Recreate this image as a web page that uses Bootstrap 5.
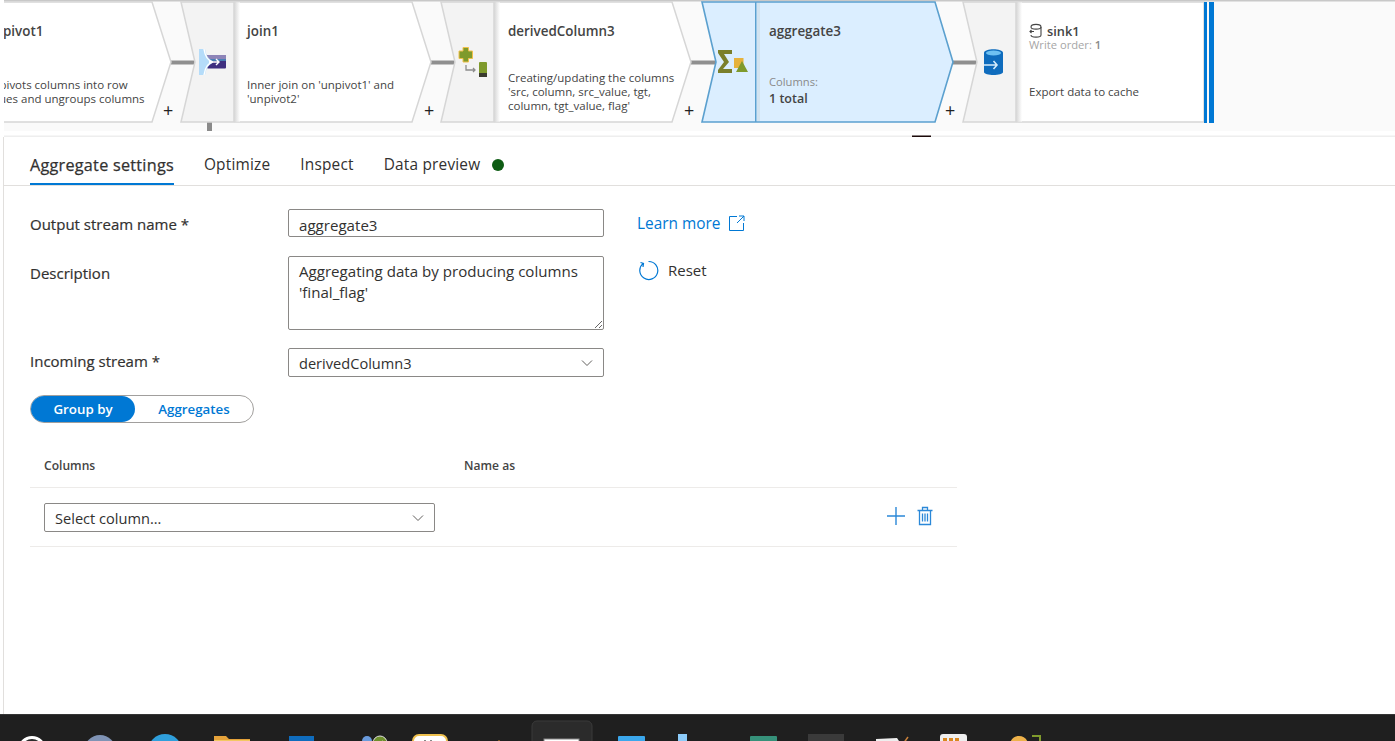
<!DOCTYPE html>
<html lang="en">
<head>
  <meta charset="UTF-8" />
  <meta name="viewport" content="width=device-width, initial-scale=1.0"/>
  <title>Aggregate settings</title>
  <link href="https://cdn.jsdelivr.net/npm/bootstrap@5.3.3/dist/css/bootstrap.min.css" rel="stylesheet" />
  <style>
    html, body { height: 100%; overflow: hidden; }
    body {
      font-family: "Open Sans", "Noto Sans", sans-serif;
      font-size: 14px;
      color: #323130;
      background: #fff;
    }
    .page { height: 741px; }

    /* data flow canvas */
    .graph {
      height: 137px;
      position: relative;
      flex: none;
      clip-path: inset(0 0 0 4px);
    }
    .graph-bg { position: absolute; left: 0; top: 0; }
    .node { position: absolute; top: 0; height: 122px; }
    .node-title { position: absolute; top: 22px; left: 0; font-size: 13.4px; font-weight: 600; color: #444; white-space: nowrap; line-height: 19px; }
    .sink-title { top: 24px; left: 18px; font-size: 12.8px; line-height: 14px; }
    .node-desc { position: absolute; left: 0; top: 92px; transform: translateY(-50%); font-size: 11.5px; line-height: 14px; color: #444; white-space: nowrap; }
    .node-sub { position: absolute; left: 0; top: 38px; font-size: 11.2px; line-height: 14px; color: #a6a6a6; white-space: nowrap; }
    .node-cols { position: absolute; left: 0; top: 75px; font-size: 11.2px; line-height: 14px; color: #8a8a8a; white-space: nowrap; }
    .node-total { position: absolute; left: 0; top: 89px; font-size: 12.5px; font-weight: 600; line-height: 20px; color: #444; white-space: nowrap; }
    .node-add { position: absolute; top: 100px; font-size: 18px; line-height: 20px; color: #222; }

    /* settings pane */
    .pane { flex: 1 1 auto; min-height: 0; margin-left: 3px; border-left: 1px solid #e1dfdd; }
    .tabs { height: 49px; padding-left: 26px; gap: 30px; border-bottom: 1px solid #e1dfdd; }
    .tabs .nav-link {
      padding: 0;
      height: 48px;
      line-height: 56px;
      font-size: 15.4px;
      letter-spacing: .2px;
      color: #323130;
      border-bottom: 2px solid transparent;
    }
    .tabs .nav-link.active { font-size: 16.2px; letter-spacing: .26px; border-bottom-color: #0078d4; -webkit-text-stroke: .25px #323130; }
    .tab-dot { width: 12px; height: 12px; border-radius: 50%; background: #0e5c14; margin: 22px 0 0 -18px; }

    .form-area { padding: 23px 0 0 26px; }
    .form-row-name { width: 258px; flex: none; font-size: 15px; line-height: 20px; -webkit-text-stroke: .2px #323130; }
    .field { width: 316px; flex: none; }
    .form-control, .form-select {
      font-size: 15.1px;
      color: #323130;
      border: 1px solid #8a8886;
      border-radius: 2px;
      padding: 2px 10px;
      line-height: 20px;
      min-height: 0;
    }
    .form-control.single { height: 28px; padding-top: 4px; padding-bottom: 1px; line-height: 20px; }
    textarea.form-control { height: 74px; padding-top: 4px; line-height: 21px; }
    .form-select {
      font-size: 14.6px;
      height: 29px;
      background-image: url("data:image/svg+xml,%3csvg xmlns='http://www.w3.org/2000/svg' viewBox='0 0 12 8'%3e%3cpath fill='none' stroke='%23605e5c' d='M1 1.5l5 5 5-5'/%3e%3c/svg%3e");
      background-size: 12px 8px;
      background-position: right 10px center;
    }
    .side-action { height: 28px; margin-left: 33px; }
    .link-blue { color: #0078d4; text-decoration: none; font-size: 15.4px; padding-top: 1px; }
    .reset-text { font-size: 15px; color: #323130; }

    .toggle { width: 224px; height: 28px; border: 1px solid #a19f9d; border-radius: 14px; }
    .toggle .btn {
      height: 26px; padding: 0; font-size: 13.3px; font-weight: 600; border: 0; border-radius: 13px; line-height: 26px;
    }
    .toggle .on { width: 104px; background: #0078d4; color: #fff; }
    .toggle .off { width: 118px; color: #0078d4; }

    .map-table { width: 927px; margin-top: 24px; }
    .map-head { height: 41px; padding-left: 14px; border-bottom: 1px solid #edebe9; font-size: 12.1px; font-weight: 600; color: #444; line-height: 37px; }
    .map-head .c1 { width: 420px; }
    .map-row { height: 59px; padding: 15px 0 0 14px; border-bottom: 1px solid #edebe9; }
    .map-row .form-select { width: 391px; }
    .map-icons { gap: 12px; margin: 3px 24px 0 0; }

    .taskbar { height: 27px; flex: none; background: #1f1f1f; border-top: 1px solid #353535; overflow: hidden; }
    .taskbar svg { display: block; }
  </style>
</head>
<body>
<div class="page d-flex flex-column">

  <div class="graph">
    <svg class="graph-bg" width="1395" height="137" viewBox="0 0 1395 137">
      <defs>
        <linearGradient id="shade"><stop offset="0" stop-color="#dcdcdc"/><stop offset="1" stop-color="#fff"/></linearGradient>
      </defs>
      <rect width="1395" height="131" fill="#fafafa"/>
      <rect width="1395" height="1.5" fill="#c8c8c8"/>
      <rect y="135.500" width="1395" height="1.5" fill="#eeeeee"/>
      <rect x="207" y="122" width="5" height="9" fill="#8a8a8a"/>
      <rect x="912" y="135.500" width="19" height="2" fill="#1c0a0a"/>

      <!-- connectors -->
      <g fill="#8f8f8f">
        <rect x="171" y="60.500" width="24" height="4"/>
        <rect x="431" y="60.500" width="24" height="4"/>
        <rect x="691" y="60.500" width="25" height="4"/>
        <rect x="953" y="60.500" width="24" height="4"/>
      </g>

      <!-- unpivot1 -->
      <path d="M0 2H152L171 62L152 122H0Z" fill="#fff" stroke="#d6d6d6" stroke-width="1.5"/>
      <!-- join1 -->
      <path d="M181 2H234V122H181L195 62Z" fill="#f3f3f3" stroke="#d6d6d6" stroke-width="1.5"/>
      <path d="M235 2H412L431 62L412 122H235Z" fill="#fff" stroke="#d6d6d6" stroke-width="1.5"/>
      <!-- derivedColumn3 -->
      <path d="M441 2H494V122H441L455 62Z" fill="#f3f3f3" stroke="#d6d6d6" stroke-width="1.5"/>
      <path d="M495 2H672L691 62L672 122H495Z" fill="#fff" stroke="#d6d6d6" stroke-width="1.5"/>
      <!-- aggregate3 -->
      <path d="M702 2H935L953 62L935 122H702L716 62Z" fill="#dbeeff" stroke="#5ba0cf" stroke-width="1.6"/>
      <rect x="755" y="2" width="1.5" height="120" fill="#5ba0cf"/>
      <rect x="757" y="3" width="3" height="118" fill="#d2e3f0"/>
      <!-- sink1 -->
      <path d="M963 2H1016V122H963L977 62Z" fill="#f3f3f3" stroke="#d6d6d6" stroke-width="1.5"/>
      <path d="M1017 2H1204V122H1017Z" fill="#fff" stroke="#d6d6d6" stroke-width="1.5"/>
      <rect x="1204" y="2" width="3" height="121" fill="#0078d4"/>
      <rect x="1209" y="2" width="5" height="121" fill="#0078d4"/>
      <rect x="235" y="2.500" width="5" height="119" fill="url(#shade)"/>
      <rect x="495" y="2.500" width="5" height="119" fill="url(#shade)"/>
      <rect x="1017" y="2.500" width="5" height="119" fill="url(#shade)"/>

      <!-- join icon -->
      <rect x="207" y="55" width="19" height="13.500" rx="1" fill="#3f2f80"/>
      <rect x="207" y="55" width="19" height="4" fill="#8d84b8"/>
      <rect x="207" y="59" width="19" height="2" fill="#4a7fb5"/>
      <path d="M199 49h6c1 6 3 9 7 12v2c-4 3-6 6-7 12h-6z" fill="#b5dcf9"/>
      <path d="M204 49c1 7 4 12 9 13c-5 1-8 6-9 13M209 62h10M216 59l3 3l-3 3" fill="none" stroke="#fff" stroke-width="1.4"/>

      <!-- derived column icon -->
      <path d="M463 47.500h5.500v3.500h4v7.500h-4v3.500h-5.500v-3.500h-4v-7.500h4z" fill="#7f9a2c" stroke="#f0c04a"/>
      <path d="M466 65v5h9M473 68l2 2l-2 2" fill="none" stroke="#8c8c8c" stroke-width="1.3"/>
      <rect x="479" y="62" width="8" height="15" rx="1" fill="#7f9a2c"/>
      <rect x="479" y="73" width="8" height="4" fill="#3a3a2e"/>

      <!-- aggregate icon -->
      <path d="M718 50h14v4h-8l5 8l-6 7h9v4h-14v-3l6-8l-6-9z" fill="#7a7f2b"/>
      <rect x="734" y="58" width="9.500" height="10" fill="#e6b23c"/>
      <path d="M742 61l6 11h-12z" fill="#7f9a2c"/>

      <!-- sink icon -->
      <path d="M984 53c0-5 19-5 19 0v19c0 4-19 4-19 0z" fill="#0f6cbd"/>
      <ellipse cx="993.500" cy="53" rx="7.500" ry="2.500" fill="#6ec1f2"/>
      <path d="M984 65h13M993.500 61l3.500 4l-3.500 4" fill="none" stroke="#d6ecfb" stroke-width="1.6"/>

      <!-- small sink glyph -->
      <g fill="none" stroke="#444" stroke-width="1.1">
        <path d="M1031 27c0-3.500 10-3.500 10 0v8c0 2.800-10 2.800-10 0"/>
        <path d="M1031 27c0 2.800 10 2.800 10 0"/>
        <path d="M1034 31.500h-4M1031.500 30l-1.500 1.500l1.500 1.500"/>
      </g>
    </svg>

    <div class="node" style="left:-14px">
      <div class="node-title">unpivot1</div>
      <div class="node-desc" style="left:-2px">Unpivots columns into row<br>values and ungroups columns</div>
    </div>
    <div class="node-add" style="left:163px">+</div>

    <div class="node" style="left:247px">
      <div class="node-title">join1</div>
      <div class="node-desc">Inner join on 'unpivot1' and<br>'unpivot2'</div>
    </div>
    <div class="node-add" style="left:424px">+</div>

    <div class="node" style="left:508px">
      <div class="node-title">derivedColumn3</div>
      <div class="node-desc">Creating/updating the columns<br>'src, column, src_value, tgt,<br>column, tgt_value, flag'</div>
    </div>
    <div class="node-add" style="left:684px">+</div>

    <div class="node" style="left:769px">
      <div class="node-title">aggregate3</div>
      <div class="node-cols">Columns:</div>
      <div class="node-total">1 total</div>
    </div>
    <div class="node-add" style="left:945px">+</div>

    <div class="node" style="left:1029px">
      <div class="node-title sink-title">sink1</div>
      <div class="node-sub">Write order: <b style="font-weight:600;color:#8a8a8a">1</b></div>
      <div class="node-desc">Export data to cache</div>
    </div>
  </div>

  <div class="pane">
    <ul class="nav tabs">
      <li class="nav-item"><a class="nav-link active" href="#">Aggregate settings</a></li>
      <li class="nav-item"><a class="nav-link" href="#">Optimize</a></li>
      <li class="nav-item"><a class="nav-link" href="#">Inspect</a></li>
      <li class="nav-item"><a class="nav-link" href="#">Data preview</a></li>
      <li class="tab-dot"></li>
    </ul>

    <div class="form-area">
      <div class="d-flex align-items-start">
        <label class="form-row-name" style="padding-top:5px">Output stream name <span>*</span></label>
        <div class="field"><input class="form-control single" type="text" value="aggregate3"></div>
        <a class="link-blue side-action d-flex align-items-center" href="#">
          Learn more
          <svg class="ms-2" width="17" height="17" viewBox="0 0 17 17" fill="none" stroke="#0078d4"><path d="M9 1.500H1.500V15.500H15.500V8M11 1H16V6M16 1L9 8"/></svg>
        </a>
      </div>

      <div class="d-flex align-items-start" style="margin-top:19px">
        <label class="form-row-name" style="padding-top:7px">Description</label>
        <div class="field"><textarea class="form-control">Aggregating data by producing columns 'final_flag'</textarea></div>
        <div class="side-action d-flex align-items-center">
          <svg width="21" height="21" viewBox="0 0 21 21" fill="none" stroke="#0078d4" stroke-width="1.2" style="margin-left:1px"><path d="M5 3.600A9 9 0 1 0 10.500 1.500M2.500 2.500L5.500 3.500L5 7"/></svg>
          <span class="reset-text" style="margin-left:9px">Reset</span>
        </div>
      </div>

      <div class="d-flex align-items-start" style="margin-top:18px">
        <label class="form-row-name" style="padding-top:3px">Incoming stream <span>*</span></label>
        <div class="field">
          <select class="form-select"><option>derivedColumn3</option></select>
        </div>
      </div>

      <div class="toggle d-flex" style="margin-top:18px">
        <button class="btn on" type="button">Group by</button>
        <button class="btn off" type="button">Aggregates</button>
      </div>

      <div class="map-table">
        <div class="map-head d-flex">
          <div class="c1">Columns</div>
          <div>Name as</div>
        </div>
        <div class="map-row d-flex justify-content-between align-items-start">
          <select class="form-select"><option>Select column...</option></select>
          <div class="map-icons d-flex align-items-center">
            <svg width="18" height="18" viewBox="0 0 18 18" stroke="#2b88d8" stroke-width="1.4"><path d="M9 0V18M0 9H18"/></svg>
            <svg width="16" height="20" viewBox="0 0 16 20" fill="none" stroke="#2b88d8" stroke-width="1.3"><path d="M0.500 4.500H15.500M2.500 4.500V18.500H13.500V4.500M5.500 4.500V1.500H10.500V4.500M5.500 7.500V15.500M8 7.500V15.500M10.500 7.500V15.500"/></svg>
          </div>
        </div>
      </div>
    </div>
  </div>

  <div class="taskbar">
    <svg width="1395" height="26" viewBox="0 715 1395 26">
      <rect x="532" y="721" width="60" height="30" rx="5" fill="#2b2b2b" stroke="#3a3a3a"/>
      <circle cx="32" cy="750" r="12.500" fill="#2b2b2b" stroke="#fff" stroke-width="3"/>
      <circle cx="100" cy="751" r="16" fill="#7f93b5"/>
      <circle cx="165" cy="751" r="17" fill="#2f9fdc"/>
      <path d="M214 741v-5h12l3 3h21v4h-36z" fill="#e5a23a"/>
      <rect x="214" y="740" width="36" height="4" fill="#f3c862"/>
      <rect x="289" y="736" width="25" height="8" fill="#0f6cbd"/>
      <ellipse cx="367" cy="741" rx="5" ry="5" fill="#6a9bdc"/>
      <circle cx="380" cy="743" r="7" fill="#6e8f2c" stroke="#ddd"/>
      <path d="M377 743l2 2l4-4" fill="none" stroke="#fff" stroke-width="1.4"/>
      <rect x="413" y="735" width="34" height="20" rx="6" fill="#fff" stroke="#eec04e" stroke-width="2"/>
      <rect x="424" y="740" width="2" height="5" fill="#888"/><rect x="430" y="740" width="2" height="5" fill="#888"/>
      <path d="M498 741l1-1l1 1z" fill="#d98a1f"/>
      <rect x="544" y="739" width="35" height="8" fill="#fff" stroke="#888"/>
      <rect x="618" y="736" width="27" height="9" rx="1" fill="#3ba7ec"/>
      <rect x="678" y="734" width="9" height="7" fill="#8ccbfa"/>
      <rect x="688" y="741" width="10" height="4" fill="#3b8de0"/>
      <rect x="750" y="736" width="27" height="9" rx="1" fill="#36917a"/>
      <rect x="808" y="734" width="36" height="12" fill="#3a3a3a"/>
      <rect x="815" y="741" width="8" height="4" fill="#7f9a2c"/>
      <path d="M876 739l21-1l4 6h-25z" fill="#eee"/>
      <path d="M903 744l5-7" stroke="#c9803a" stroke-width="1.5"/>
      <rect x="940" y="734" width="27" height="12" rx="3" fill="#eee"/>
      <rect x="943" y="738" width="4" height="4" fill="#d9861f"/><rect x="949" y="738" width="4" height="4" fill="#d9861f"/><rect x="955" y="738" width="4" height="4" fill="#d9861f"/>
      <path d="M1010 745c0-12 18-12 18 0z" fill="#eeb24a"/>
      <path d="M1032 736h8v9" fill="none" stroke="#7f9a2c" stroke-width="2"/>
    </svg>
  </div>
</div>
<script src="https://cdn.jsdelivr.net/npm/bootstrap@5.3.3/dist/js/bootstrap.bundle.min.js"></script>
</body>
</html>
